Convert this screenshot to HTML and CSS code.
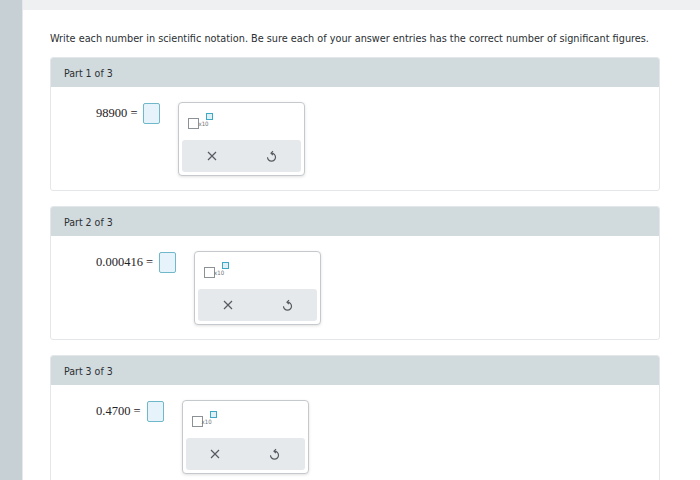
FILE: index.html
```html
<!DOCTYPE html>
<html>
<head>
<meta charset="utf-8">
<link rel="stylesheet" href="styles.css">
</head>
<body>
<div class="app">
  <aside class="sidebar"></aside>
  <main class="main">
    <div class="topbar"></div>
    <div class="content">
      <p class="instructions">Write each number in scientific notation. Be sure each of your answer entries has the correct number of significant figures.</p>

      <section class="card">
        <div class="card-head">Part 1 of 3</div>
        <div class="card-body">
          <div class="eq"><span class="num">98900 =</span><span class="input"></span></div>
          <div class="palette">
            <div class="palette-top">
              <span class="sci"><span class="sci-box"></span><span class="sci-x">x10</span><span class="sci-exp"></span></span>
            </div>
            <div class="palette-bar">
              <span class="btn"><svg width="10" height="10" viewBox="0 0 10 10"><path d="M1 1L9 9M9 1L1 9" stroke="#555b61" stroke-width="1.2" fill="none"/></svg></span>
              <span class="btn"><svg width="11" height="12" viewBox="0 0 11 12"><path d="M5.5 3.2A4 4 0 1 1 1.5 7.2" stroke="#555b61" stroke-width="1.2" fill="none"/><path d="M7 1.2L5 3.2L7 5.2" stroke="#555b61" stroke-width="1.2" fill="none"/></svg></span>
            </div>
          </div>
        </div>
      </section>

      <section class="card">
        <div class="card-head">Part 2 of 3</div>
        <div class="card-body">
          <div class="eq"><span class="num">0.000416 =</span><span class="input"></span></div>
          <div class="palette">
            <div class="palette-top">
              <span class="sci"><span class="sci-box"></span><span class="sci-x">x10</span><span class="sci-exp"></span></span>
            </div>
            <div class="palette-bar">
              <span class="btn"><svg width="10" height="10" viewBox="0 0 10 10"><path d="M1 1L9 9M9 1L1 9" stroke="#555b61" stroke-width="1.2" fill="none"/></svg></span>
              <span class="btn"><svg width="11" height="12" viewBox="0 0 11 12"><path d="M5.5 3.2A4 4 0 1 1 1.5 7.2" stroke="#555b61" stroke-width="1.2" fill="none"/><path d="M7 1.2L5 3.2L7 5.2" stroke="#555b61" stroke-width="1.2" fill="none"/></svg></span>
            </div>
          </div>
        </div>
      </section>

      <section class="card">
        <div class="card-head">Part 3 of 3</div>
        <div class="card-body">
          <div class="eq"><span class="num">0.4700 =</span><span class="input"></span></div>
          <div class="palette">
            <div class="palette-top">
              <span class="sci"><span class="sci-box"></span><span class="sci-x">x10</span><span class="sci-exp"></span></span>
            </div>
            <div class="palette-bar">
              <span class="btn"><svg width="10" height="10" viewBox="0 0 10 10"><path d="M1 1L9 9M9 1L1 9" stroke="#555b61" stroke-width="1.2" fill="none"/></svg></span>
              <span class="btn"><svg width="11" height="12" viewBox="0 0 11 12"><path d="M5.5 3.2A4 4 0 1 1 1.5 7.2" stroke="#555b61" stroke-width="1.2" fill="none"/><path d="M7 1.2L5 3.2L7 5.2" stroke="#555b61" stroke-width="1.2" fill="none"/></svg></span>
            </div>
          </div>
        </div>
      </section>
    </div>
  </main>
</div>
</body>
</html>
```

FILE: styles.css
```css
html, body {
  margin: 0;
  padding: 0;
  height: 100%;
  overflow: hidden;
  background: #ffffff;
}
body {
  font-family: "DejaVu Sans Condensed", "DejaVu Sans", Verdana, sans-serif;
  color: #2b2f33;
}
.app {
  display: flex;
  height: 480px;
}
.sidebar {
  width: 22px;
  flex: none;
  background: #c6d0d5;
}
.main {
  flex: 1;
  display: flex;
  flex-direction: column;
  border-left: 1px solid #e6e9eb;
}
.topbar {
  height: 10px;
  background: #eef0f2;
  flex: none;
}
.content {
  padding: 0 40px 0 27px;
}
.instructions {
  margin: 22px 0 12px 0;
  font-size: 10.8px;
  line-height: 13px;
  color: #2b2f33;
}
.card {
  border: 1px solid #e4e7e9;
  border-radius: 3px;
  margin-bottom: 15px;
  overflow: hidden;
}
.card-head {
  height: 29px;
  background: #d1dadd;
  font-size: 10.5px;
  line-height: 31px;
  padding-left: 13px;
  color: #2b2f33;
}
.card-body {
  height: 103px;
  display: flex;
  align-items: flex-start;
  padding: 15px 0 0 45px;
  box-sizing: border-box;
}
.eq {
  display: flex;
  align-items: center;
  margin-top: 1px;
}
.num {
  font-family: "Liberation Serif", "Times New Roman", serif;
  font-size: 12.5px;
  color: #1f2326;
}
.input {
  display: inline-block;
  width: 15px;
  height: 19px;
  margin-left: 6px;
  background: #e6f3fa;
  border: 1px solid #6fb8c9;
  border-radius: 2px;
}
.palette {
  margin-left: 18px;
  width: 125px;
  height: 72px;
  border: 1px solid #c5c9cd;
  border-radius: 4px;
  box-shadow: 0 1px 3px rgba(0,0,0,0.12);
  background: #fff;
  box-sizing: content-box;
  display: flex;
  flex-direction: column;
}
.palette-top {
  height: 37px;
  padding: 9px 0 0 9px;
  box-sizing: border-box;
}
.sci {
  position: relative;
  display: inline-block;
  width: 28px;
  height: 18px;
}
.sci-box {
  position: absolute;
  left: 0;
  top: 6px;
  width: 9px;
  height: 9px;
  border: 1px solid #8c9196;
  background: #fff;
}
.sci-x {
  position: absolute;
  left: 10px;
  top: 9px;
  font-size: 6px;
  line-height: 6px;
  color: #6b7075;
}
.sci-exp {
  position: absolute;
  left: 18px;
  top: 1px;
  width: 5px;
  height: 5px;
  border: 1px solid #3ea9c4;
  background: #dff0f7;
}
.palette-bar {
  margin: 0 3px;
  height: 32px;
  background: #e6e9ec;
  border-radius: 3px;
  display: flex;
}
.btn {
  flex: 1;
  display: flex;
  align-items: center;
  justify-content: center;
}
.btn svg {
  display: block;
}
```
